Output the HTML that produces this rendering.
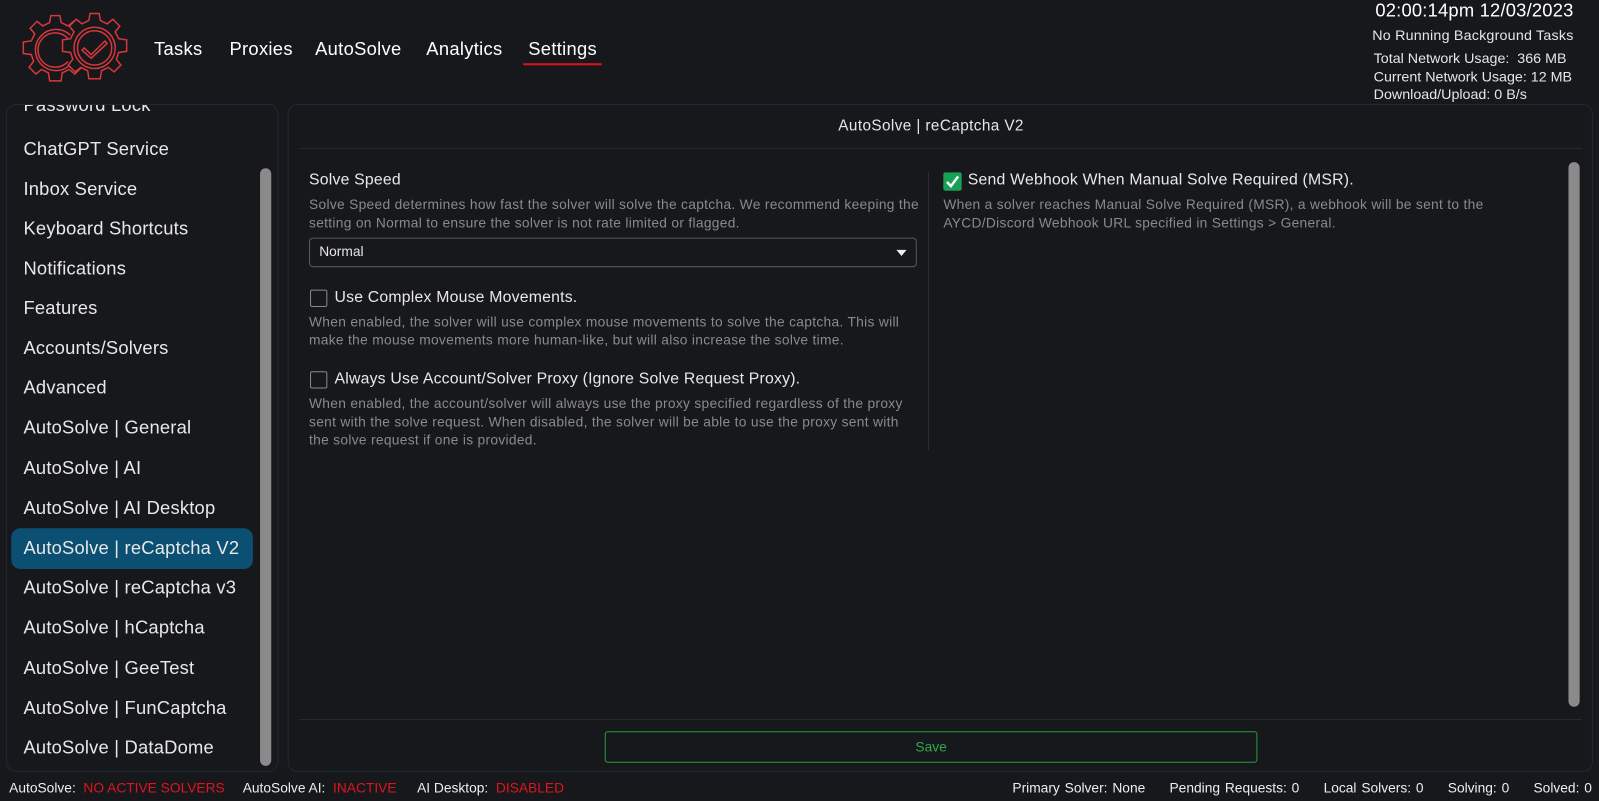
<!DOCTYPE html>
<html><head><style>
*{box-sizing:border-box;margin:0;padding:0}
html,body{width:1599px;height:801px;overflow:hidden;background:#17181c;font-family:"Liberation Sans",sans-serif;color:#e6e6e6}
#w{position:absolute;left:0;top:0;width:1568px;height:785px;transform:scale(1.0198);transform-origin:0 0}
.a{position:absolute;white-space:nowrap}
.nav{top:38px;font-size:18px;color:#fff;letter-spacing:0.3px}
.side{left:6px;top:102px;width:267px;height:655px;border:1px solid #1e2a33;border-radius:10px;overflow:hidden}
.it{position:absolute;left:16px;font-size:18px;color:#e8e8e8;letter-spacing:0.2px}
.main{left:282px;top:102px;width:1280px;height:655px;border:1px solid #1e2a33;border-radius:10px}
.t{font-size:15.5px;color:#e8e8e8;letter-spacing:0.2px}
.d{font-size:13.5px;color:#8a8a8a;line-height:18px;white-space:normal;letter-spacing:0.3px}
.cb{position:absolute;width:17px;height:17px;border:1.5px solid #888;border-radius:2px}
.st{top:765px;font-size:13.5px;color:#eee}
.r{color:#e0141e}
</style></head><body><div id="w">
<svg class="a" style="left:20px;top:12px" width="106" height="72" viewBox="0 0 102 68" fill="none" stroke="#d8383c" stroke-width="1.3">
<g transform="translate(33,35) scale(1.08)"><path d="M-4,-30 L4,-30 L5,-24 L11,-21 L16,-25 L22,-19 L18,-14 L21,-8 L28,-7 L28,3 L21,4 L19,10 L23,15 L17,21 L12,17 L6,20 L5,27 L-5,27 L-6,20 L-12,17 L-17,21 L-23,15 L-19,10 L-21,4 L-28,3 L-28,-7 L-21,-8 L-18,-14 L-22,-19 L-16,-25 L-11,-21 L-5,-24Z"/><path d="M13,-13 A18,18 0 1 0 13,13"/><path d="M11,-10 A15,15 0 1 0 11,10"/></g>
<g transform="translate(70,33) scale(1.08)"><path fill="#17181c" d="M-4,-30 L4,-30 L5,-24 L11,-21 L16,-25 L22,-19 L18,-14 L21,-8 L28,-7 L28,3 L21,4 L19,10 L23,15 L17,21 L12,17 L6,20 L5,27 L-5,27 L-6,20 L-12,17 L-17,21 L-23,15 L-19,10 L-21,4 L-28,3 L-28,-7 L-21,-8 L-18,-14 L-22,-19 L-16,-25 L-11,-21 L-5,-24Z"/><circle r="18"/><circle r="15"/><path d="M-9,0 L-3,6 L9,-6 L11,-4 L-3,9 L-11,2Z"/></g>
</svg>
<div class="a nav" style="left:151px">Tasks</div>
<div class="a nav" style="left:225px">Proxies</div>
<div class="a nav" style="left:309px">AutoSolve</div>
<div class="a nav" style="left:418px">Analytics</div>
<div class="a nav" style="left:518px">Settings</div>
<div class="a" style="left:513px;top:62px;width:77px;height:2px;background:#e0141e"></div>
<div class="a" style="right:25px;top:0;font-size:18px;color:#fff;letter-spacing:0.2px">02:00:14pm 12/03/2023</div>
<div class="a" style="right:25px;top:26px;font-size:14px;letter-spacing:0.2px">No Running Background Tasks</div>
<div class="a" style="left:1347px;top:49px;font-size:14px;line-height:17.5px">Total Network Usage:&nbsp; 366 MB<br>Current Network Usage: 12 MB<br>Download/Upload: 0 B/s</div>

<div class="a side">
<div class="it" style="top:-10px">Password Lock</div>
<div class="it" style="top:33px">ChatGPT Service</div>
<div class="it" style="top:72px">Inbox Service</div>
<div class="it" style="top:111px">Keyboard Shortcuts</div>
<div class="it" style="top:150px">Notifications</div>
<div class="it" style="top:189px">Features</div>
<div class="it" style="top:228px">Accounts/Solvers</div>
<div class="it" style="top:267px">Advanced</div>
<div class="it" style="top:306px">AutoSolve | General</div>
<div class="it" style="top:346px">AutoSolve | AI</div>
<div class="it" style="top:385px">AutoSolve | AI Desktop</div>
<div class="a" style="left:4px;top:415px;width:237px;height:40px;background:#0b4f72;border-radius:9px"></div>
<div class="it" style="top:424px">AutoSolve | reCaptcha V2</div>
<div class="it" style="top:463px">AutoSolve | reCaptcha v3</div>
<div class="it" style="top:502px">AutoSolve | hCaptcha</div>
<div class="it" style="top:542px">AutoSolve | GeeTest</div>
<div class="it" style="top:581px">AutoSolve | FunCaptcha</div>
<div class="it" style="top:620px">AutoSolve | DataDome</div>
<div class="a" style="left:248px;top:62px;width:11px;height:586px;background:#8a8a8a;border-radius:6px"></div>
</div>

<div class="a main">
<div class="a" style="left:0;width:1260px;top:12px;text-align:center;font-size:15px;letter-spacing:0.4px">AutoSolve | reCaptcha V2</div>
<div class="a" style="left:10px;right:10px;top:42px;height:1px;background:#262b31"></div>
<div class="a" style="left:10px;right:10px;top:602px;height:1px;background:#262b31"></div>
<div class="a" style="left:627px;top:66px;width:1px;height:272px;background:#2c2f34"></div>
<div class="a" style="left:1255px;top:56px;width:11px;height:534px;background:#8a8a8a;border-radius:6px"></div>

<div class="a t" style="left:20px;top:65px">Solve Speed</div>
<div class="a d" style="left:20px;top:89px;width:600px">Solve Speed determines how fast the solver will solve the captcha. We recommend keeping the setting on Normal to ensure the solver is not rate limited or flagged.</div>
<div class="a" style="left:20px;top:130px;width:596px;height:29px;border:1px solid #5a5a5a;border-radius:4px;font-size:13.5px;padding:5px 9px">Normal</div>
<div class="a" style="left:596px;top:142px;border-left:5px solid transparent;border-right:5px solid transparent;border-top:6px solid #eee"></div>

<div class="cb" style="left:21px;top:181px"></div>
<div class="a t" style="left:45px;top:180px">Use Complex Mouse Movements.</div>
<div class="a d" style="left:20px;top:204px;width:600px">When enabled, the solver will use complex mouse movements to solve the captcha. This will make the mouse movements more human-like, but will also increase the solve time.</div>

<div class="cb" style="left:21px;top:261px"></div>
<div class="a t" style="left:45px;top:260px">Always Use Account/Solver Proxy (Ignore Solve Request Proxy).</div>
<div class="a d" style="left:20px;top:284px;width:585px">When enabled, the account/solver will always use the proxy specified regardless of the proxy sent with the solve request. When disabled, the solver will be able to use the proxy sent with the solve request if one is provided.</div>

<div class="a" style="left:642px;top:66px;width:18px;height:18px;background:#1aa055;border-radius:2px"></div>
<svg class="a" style="left:642px;top:66px" width="18" height="18"><path d="M3.5,9.5 L7.5,13.5 L14.5,4" stroke="#fff" stroke-width="2.4" fill="none"/></svg>
<div class="a t" style="left:666px;top:65px">Send Webhook When Manual Solve Required (MSR).</div>
<div class="a d" style="left:642px;top:89px;width:545px">When a solver reaches Manual Solve Required (MSR), a webhook will be sent to the AYCD/Discord Webhook URL specified in Settings &gt; General.</div>

<div class="a" style="left:310px;top:614px;width:640px;height:31px;border:1px solid #2a9a3c;border-radius:3px;color:#2fa84a;font-size:13.5px;text-align:center;line-height:29px">Save</div>
</div>

<div class="a st" style="left:9px">AutoSolve:&nbsp; <span class="r">NO ACTIVE SOLVERS</span></div>
<div class="a st" style="left:238px">AutoSolve AI:&nbsp; <span class="r">INACTIVE</span></div>
<div class="a st" style="left:409px">AI Desktop:&nbsp; <span class="r">DISABLED</span></div>
<div class="a st" style="right:7px;word-spacing:1px">Primary Solver: None&nbsp;&nbsp;&nbsp;&nbsp; Pending Requests: 0&nbsp;&nbsp;&nbsp;&nbsp; Local Solvers: 0&nbsp;&nbsp;&nbsp;&nbsp; Solving: 0&nbsp;&nbsp;&nbsp;&nbsp; Solved: 0</div>
</div></body></html>
